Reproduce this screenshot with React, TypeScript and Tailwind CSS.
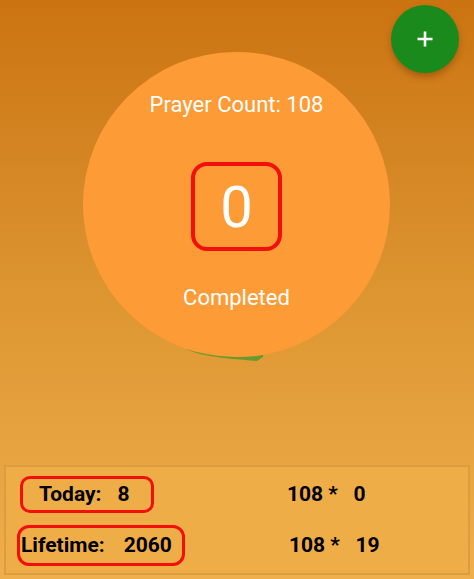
import React from "react";

export default function App() {
  return (
    <div
      className="relative w-[474px] h-[579px] overflow-hidden flex flex-col bg-gradient-to-b from-[#cb7310] via-[#dc9530] to-[#efaf4c]"
      style={{ fontFamily: "Roboto, 'Liberation Sans', sans-serif" }}
    >
      {/* FAB */}
      <div className="absolute top-[5px] right-[15px] w-[68px] h-[68px] rounded-full bg-[#1a8a1c] shadow-[0_4px_6px_rgba(120,60,0,0.45)] flex items-center justify-center">
        <svg width="18" height="18" viewBox="0 0 18 18">
          <path d="M9 1.5v15M1.5 9h15" stroke="white" strokeWidth="2.6" strokeLinecap="butt" />
        </svg>
      </div>

      {/* Circle area */}
      <div className="relative mt-[52px] w-[307px] h-[305px] ml-[83px]">
        <svg className="absolute left-[100px] top-[285px]" width="85" height="26" viewBox="0 0 85 26">
          <path d="M4 12 Q 16 20 74 24 L 80 20 L 80 0 L 4 0 Z" fill="#6b9a2c" />
        </svg>
        <div className="absolute inset-0 rounded-full bg-[#fd9b36] flex flex-col items-center pt-[42px]">
          <div className="text-white text-[22px] leading-[22px]">Prayer Count: 108</div>
          <div className="mt-[46px] w-[91px] h-[89px] rounded-[16px] border-[4px] border-[#f20f0c] flex items-center justify-center">
            <span className="text-white text-[58px] leading-none">0</span>
          </div>
          <div className="mt-[36px] text-white text-[22px] leading-[22px]">Completed</div>
        </div>
      </div>

      {/* Bottom panel */}
      <div className="absolute left-[4px] top-[465px] w-[466px] h-[110px] border-2 border-[#dc9d40] bg-[#efad48] pl-[11px] pt-[9px] flex flex-col gap-[12px] text-black font-bold text-[21px]">
        <div className="grid grid-cols-[270px_1fr] items-center">
          <div className="ml-[3px] w-[134px] h-[37px] border-[3px] border-[#f20f0c] rounded-[10px] flex items-center pl-[16px] leading-none">
            <span>Today:</span>
            <span className="ml-[16px]">8</span>
          </div>
          <div className="leading-none whitespace-pre">108 *   0</div>
        </div>
        <div className="grid grid-cols-[270px_1fr] items-center">
          <div className="w-[168px] h-[41px] border-[3px] border-[#f20f0c] rounded-[12px] flex items-center pl-[1px] leading-none">
            <span>Lifetime:</span>
            <span className="ml-[19px]">2060</span>
          </div>
          <div className="ml-[2px] leading-none whitespace-pre">108 *   19</div>
        </div>
      </div>
    </div>
  );
}
